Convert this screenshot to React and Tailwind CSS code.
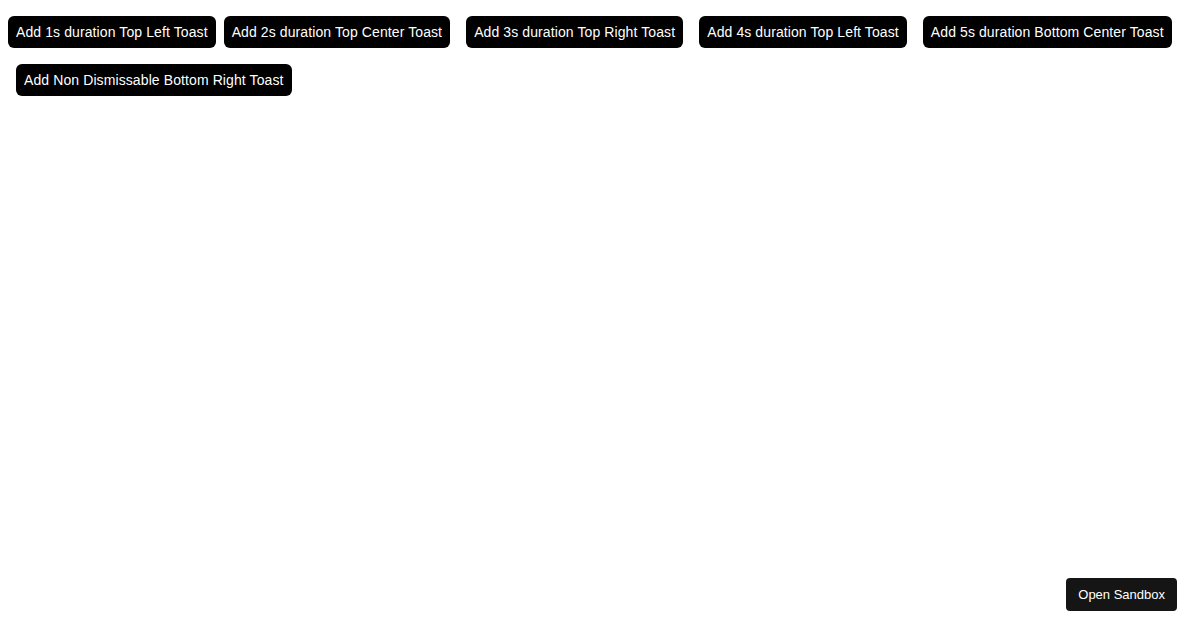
const toasts = [
  'Add 1s duration Top Left Toast',
  'Add 2s duration Top Center Toast',
  'Add 3s duration Top Right Toast',
  'Add 4s duration Top Left Toast',
  'Add 5s duration Bottom Center Toast',
  'Add Non Dismissable Bottom Right Toast',
]

export default function App() {
  return (
    <div className="relative h-[630px] w-full bg-white font-['Liberation_Sans',Arial,sans-serif]">
      <div className="flex flex-wrap p-2">
        {toasts.map((label, i) => (
          <button
            key={label}
            className={`${i === 0 ? 'my-2' : 'm-2'} h-8 rounded-md bg-black px-2 text-sm leading-8 tracking-[0.1px] text-white`}
          >
            {label}
          </button>
        ))}
      </div>
      {/* floating sandbox link, pinned to the corner over the page */}
      <button className="fixed bottom-[19px] right-[23px] h-[33px] rounded bg-[#151515] px-3 text-[13px] text-white">
        Open Sandbox
      </button>
    </div>
  )
}
